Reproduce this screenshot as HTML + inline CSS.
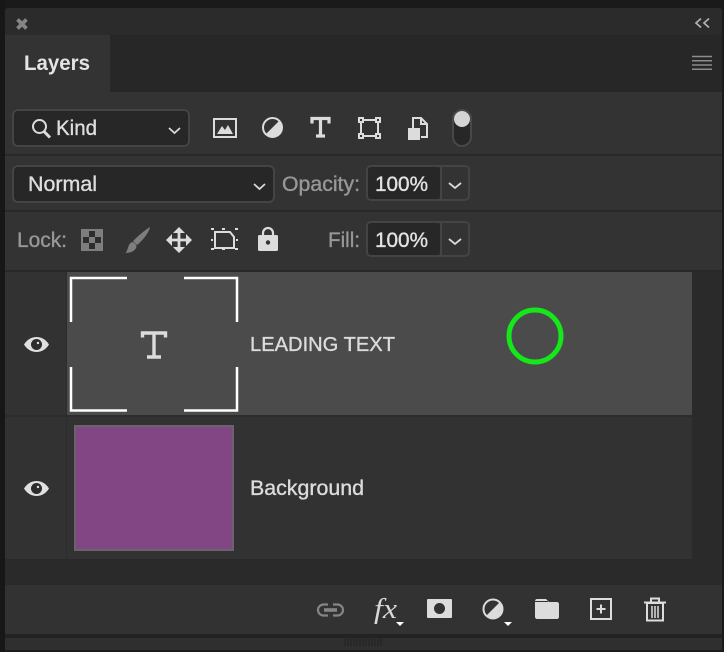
<!DOCTYPE html>
<html><head><meta charset="utf-8"><style>
html,body{margin:0;padding:0;background:#1a1a1a;width:724px;height:652px;overflow:hidden}
svg{display:block;filter:blur(.3px)}
text{font-family:"Liberation Sans",sans-serif;font-size:21px;stroke-width:.35px}
</style></head><body>
<svg width="724" height="652" viewBox="0 0 724 652" xmlns="http://www.w3.org/2000/svg">
<rect width="724" height="652" fill="#1a1a1a"/>
<rect x="5" y="8" width="717" height="644" rx="3" fill="#2a2a2a"/>
<!-- title and tab bars -->
<rect x="5" y="8" width="717" height="27" rx="3" fill="#2b2b2b"/>
<rect x="5" y="35" width="717" height="57" fill="#272727"/>
<rect x="5" y="35" width="105" height="57" fill="#333"/>
<path d="M17.500 19.500l9 9M26.500 19.500l-9 9" stroke="#858585" stroke-width="3.800" fill="none"/>
<path d="M701 18.500l-5 4.500 5 4.500M709 18.500l-5 4.500 5 4.500" stroke="#b0b0b0" stroke-width="1.700" fill="none"/>
<path d="M692 56.500h20M692 60.700h20M692 65h20M692 69.200h20" stroke="#8c8c8c" stroke-width="1.500"/>
<text x="24" y="70" font-weight="700" fill="#e4e4e4" textLength="66" lengthAdjust="spacingAndGlyphs">Layers</text>
<!-- toolbars -->
<rect x="5" y="92" width="717" height="62" fill="#333"/>
<rect x="5" y="154" width="717" height="2" fill="#282828"/>
<rect x="5" y="156" width="717" height="54" fill="#333"/>
<rect x="5" y="210" width="717" height="2" fill="#282828"/>
<rect x="5" y="212" width="717" height="58" fill="#333"/>
<rect x="5" y="270" width="717" height="2" fill="#282828"/>
<!-- kind select -->
<rect x="13" y="110" width="176" height="36" rx="5" fill="#272727" stroke="#444" stroke-width="2"/>
<circle cx="39.500" cy="126.500" r="6.500" fill="none" stroke="#dcdcdc" stroke-width="2"/>
<path d="M44 131.500l6 6" stroke="#dcdcdc" stroke-width="3"/>
<text x="56" y="135" fill="#dedede" stroke="#dedede" textLength="41" lengthAdjust="spacingAndGlyphs">Kind</text>
<path d="M169 128l5.500 5 5.500-5" stroke="#d8d8d8" stroke-width="1.800" fill="none"/>
<!-- filter icons -->
<rect x="214" y="119" width="22" height="18" fill="none" stroke="#dcdcdc" stroke-width="2"/>
<path d="M217 134l5-8 3 4 3-5 5 9z" fill="#dcdcdc"/>
<circle cx="272.500" cy="127.500" r="9.500" fill="none" stroke="#dcdcdc" stroke-width="2"/>
<path d="M279.500 120.500a9.900 9.900 0 0 1-14 14z" fill="#dcdcdc"/>
<path d="M312 123.500v-5h17v5M320.500 119v17M316 136h9" fill="none" stroke="#dcdcdc" stroke-width="3.200"/>
<g fill="#333" stroke="#dcdcdc" stroke-width="2">
<rect x="361" y="120" width="17" height="16" fill="none"/>
<rect x="359" y="118" width="4" height="4"/><rect x="376" y="118" width="4" height="4"/>
<rect x="359" y="134" width="4" height="4"/><rect x="376" y="134" width="4" height="4"/>
</g>
<path d="M413 128v-10h8l6 6v13h-6M421 118v6h6" fill="none" stroke="#dcdcdc" stroke-width="2"/>
<rect x="408" y="128" width="12" height="12" fill="#dcdcdc"/>
<rect x="453" y="110" width="18" height="36" rx="9" fill="#272727" stroke="#484848" stroke-width="2"/>
<circle cx="462" cy="119" r="8" fill="#d4d4d4"/>
<!-- normal select -->
<rect x="13" y="166" width="261" height="36" rx="5" fill="#272727" stroke="#444" stroke-width="2"/>
<text x="28" y="191" fill="#dedede" stroke="#dedede" textLength="69" lengthAdjust="spacingAndGlyphs">Normal</text>
<path d="M254 184l5.500 5 5.500-5" stroke="#d8d8d8" stroke-width="1.800" fill="none"/>
<text x="282" y="191" fill="#989898" stroke="#989898" textLength="78" lengthAdjust="spacingAndGlyphs">Opacity:</text>
<rect x="367" y="166" width="102" height="34" rx="4" fill="#333" stroke="#444" stroke-width="2"/>
<rect x="368" y="167" width="72" height="32" rx="3" fill="#272727"/>
<rect x="440" y="166" width="2" height="34" fill="#444"/>
<text x="375" y="191" fill="#e2e2e2" stroke="#e2e2e2" textLength="53" lengthAdjust="spacingAndGlyphs">100%</text>
<path d="M449 183l6 5 6-5" stroke="#d8d8d8" stroke-width="1.800" fill="none"/>
<!-- lock row -->
<text x="17" y="247" fill="#989898" stroke="#989898" textLength="50" lengthAdjust="spacingAndGlyphs">Lock:</text>
<rect x="81" y="229" width="22" height="22" fill="#7e7e7e"/>
<path d="M89 231h6v6h-6zM83 237h6v6h-6zM95 237h6v6h-6zM89 243h6v6h-6z" fill="#2d2d2d"/>
<path d="M150 227c-1 6-8 14-13 18-2-2-3-3-4-4 5-5 12-11 17-14z" fill="#7e7e7e"/>
<path d="M132 242c2 0 4 2 4.500 4 0 4-5 7-11 7 3-3 2-9 6.500-11z" fill="#7e7e7e"/>
<path d="M179 230v20M169 240h20" stroke="#dcdcdc" stroke-width="2.800"/>
<path d="M179 227l6 6h-12zM179 253l6-6h-12zM166 240l6-6v12zM192 240l-6-6v12z" fill="#dcdcdc"/>
<path d="M215 232h15l4 5v11h-19z" fill="none" stroke="#dcdcdc" stroke-width="2"/>
<path d="M211 229h3M222 229h3M235 229h3M211 240h2M236 240h2M211 249h3M222 249h3M235 249h3" stroke="#dcdcdc" stroke-width="2"/>
<path d="M263 236v-3a5 5 0 0 1 10 0v3" fill="none" stroke="#dcdcdc" stroke-width="2.200"/>
<rect x="258" y="235" width="20" height="16" rx="1.500" fill="#dcdcdc"/>
<circle cx="268" cy="242.500" r="2.200" fill="#333"/>
<text x="328" y="247" fill="#989898" stroke="#989898" textLength="32" lengthAdjust="spacingAndGlyphs">Fill:</text>
<rect x="367" y="222" width="102" height="34" rx="4" fill="#333" stroke="#444" stroke-width="2"/>
<rect x="368" y="223" width="72" height="32" rx="3" fill="#272727"/>
<rect x="440" y="222" width="2" height="34" fill="#444"/>
<text x="375" y="247" fill="#e2e2e2" stroke="#e2e2e2" textLength="53" lengthAdjust="spacingAndGlyphs">100%</text>
<path d="M449 239l6 5 6-5" stroke="#d8d8d8" stroke-width="1.800" fill="none"/>
<!-- layers -->
<rect x="5" y="272" width="687" height="287" fill="#323232"/>
<rect x="692" y="272" width="30" height="313" fill="#2a2a2a"/>
<rect x="5" y="415" width="687" height="2" fill="#2c2c2c"/>
<rect x="66" y="272" width="1" height="287" fill="#2c2c2c"/>
<rect x="67" y="272" width="625" height="143" fill="#4b4b4b"/>
<path d="M71 322v-44h56M184 278h53v44M71 367v43.500h56M184 410.500h53v-43.500" fill="none" stroke="#fff" stroke-width="2.500"/>
<path d="M142.500 337.500v-4.500h23v4.500M154 333v24M147 357h14" fill="none" stroke="#dcdcdc" stroke-width="3.400"/>
<text x="250" y="351" fill="#dcdcdc" stroke="#dcdcdc" textLength="145" lengthAdjust="spacingAndGlyphs" style="font-size:20px">LEADING TEXT</text>
<circle cx="535" cy="336" r="26" fill="none" stroke="#14e81a" stroke-width="5"/>
<path d="M24 344.500c6-10 19-10 25 0-6 10-19 10-25 0z" fill="#e0e0e0"/>
<circle cx="36.500" cy="344.500" r="5.500" fill="#2c2c2c"/><circle cx="38" cy="343" r="1.200" fill="#e0e0e0"/>
<path d="M24 488.500c6-10 19-10 25 0-6 10-19 10-25 0z" fill="#e0e0e0"/>
<circle cx="36.500" cy="488.500" r="5.500" fill="#2c2c2c"/><circle cx="38" cy="487" r="1.200" fill="#e0e0e0"/>
<rect x="75" y="426" width="158" height="124" fill="#824685" stroke="#696469" stroke-width="2"/>
<text x="250" y="495" fill="#dcdcdc" stroke="#dcdcdc" textLength="114" lengthAdjust="spacingAndGlyphs">Background</text>
<rect x="5" y="559" width="687" height="26" fill="#2a2a2a"/>
<!-- footer -->
<rect x="5" y="585" width="717" height="49" fill="#323232"/>
<rect x="5" y="634" width="717" height="4" fill="#222"/>
<rect x="5" y="638" width="717" height="12" fill="#2f2f2f"/>
<rect x="0" y="650" width="724" height="2" fill="#1c1c1c"/>
<path d="M345 637v9M348 637v9M351 637v9M354 637v9M357 637v9M360 637v9M363 637v9M366 637v9M369 637v9M372 637v9M375 637v9M378 637v9M381 637v9" stroke="#262626" stroke-width="1.400"/>
<rect x="0" y="0" width="5" height="652" fill="#171717"/>
<path d="M328 604.500h-4.500a5.500 5.500 0 0 0 0 11h4.500M333 604.500h4.500a5.500 5.500 0 0 1 0 11h-4.500" fill="none" stroke="#858585" stroke-width="2.200"/>
<path d="M324 610h13" stroke="#858585" stroke-width="3.600"/>
<text x="374" y="618" fill="#d8d8d8" font-style="italic" style="font-family:'Liberation Serif',serif;font-size:28px;stroke-width:0" textLength="23" lengthAdjust="spacingAndGlyphs">fx</text>
<path d="M396 622h8l-4 4zM504 622h8l-4 4z" fill="#fff"/>
<rect x="427" y="599" width="25" height="19" rx="1" fill="#dcdcdc"/>
<circle cx="439.500" cy="608.500" r="5.500" fill="#323232"/>
<circle cx="493" cy="609" r="9.500" fill="none" stroke="#dcdcdc" stroke-width="2"/>
<path d="M500 602a9.900 9.900 0 0 1-14 14z" fill="#dcdcdc"/>
<path d="M535 601c0-1 1-2 2-2h9l3 3h8c1 0 2 1 2 2v13c0 1-1 2-2 2h-20c-1 0-2-1-2-2z" fill="#dcdcdc"/>
<path d="M535 601.500h13" stroke="#323232" stroke-width="1"/>
<rect x="591" y="599" width="20" height="20" fill="none" stroke="#dcdcdc" stroke-width="2"/>
<path d="M601 604.500v9M596.500 609h9" stroke="#dcdcdc" stroke-width="2"/>
<path d="M644 602.500h22M651 602v-3.500h8v3.500" fill="none" stroke="#dcdcdc" stroke-width="2"/>
<rect x="647" y="603" width="16" height="17.500" fill="none" stroke="#dcdcdc" stroke-width="2"/>
<path d="M652 606v12M655 606v12M658 606v12" stroke="#dcdcdc" stroke-width="1.500"/>
</svg>
</body></html>
